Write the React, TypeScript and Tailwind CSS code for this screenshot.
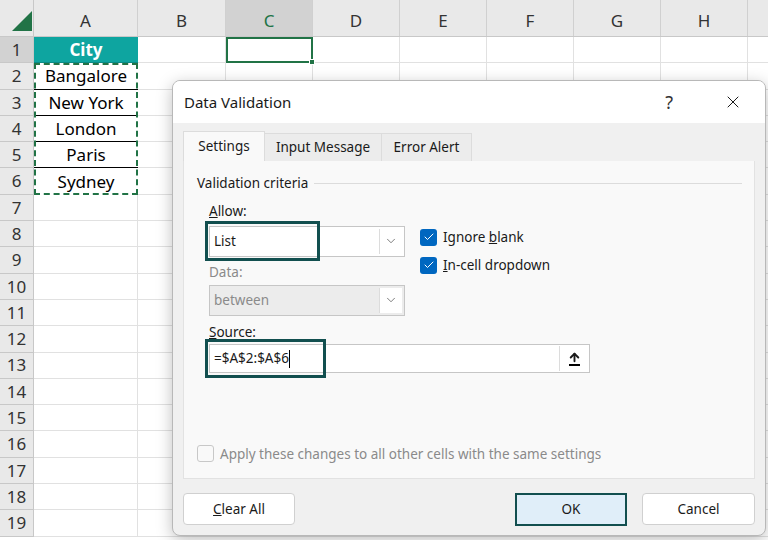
import { Check, ChevronDown, X, ArrowUp } from "lucide-react";

const cols = [
  { l: "A", w: 104 },
  { l: "B", w: 88 },
  { l: "C", w: 87 },
  { l: "D", w: 87 },
  { l: "E", w: 87 },
  { l: "F", w: 87 },
  { l: "G", w: 87 },
  { l: "H", w: 87 },
  { l: "", w: 40 },
];
const cities = ["Bangalore", "New York", "London", "Paris", "Sydney"];
const rows = Array.from({ length: 19 }, (_, i) => i + 1);

function Sheet() {
  return (
    <div className="relative flex flex-col font-['Lato',sans-serif] text-[17px] text-black">
      <div className="flex h-[37px] bg-[#e9e9e9] border-b border-[#c8c8c8]">
        <div className="relative w-[34px] shrink-0 border-r border-[#c8c8c8]">
          <svg className="absolute left-[12px] top-[11px]" width="20" height="20" viewBox="0 0 20 20">
            <polygon points="20,0 20,20 0,20" fill="#217346" />
          </svg>
        </div>
        {cols.map((c) => (
          <div
            key={c.l}
            style={{ width: c.w }}
            className={`shrink-0 flex items-end justify-center pb-[3px] border-r border-[#d0d0d0] ${c.l === "C" ? "bg-[#d2d2d2] text-[#217346]" : "text-[#333]"}`}
          >
            {c.l}
          </div>
        ))}
      </div>
      {rows.map((r) => (
        <div key={r} className="flex h-[26.3px]">
          <div className={`w-[34px] shrink-0 flex items-center justify-center border-r border-b border-[#c8c8c8] text-[#333] ${r === 1 ? "bg-[#d2d2d2]" : "bg-[#e9e9e9]"}`}>
            {r}
          </div>
          {cols.map((c, ci) => {
            if (ci === 0 && r === 1)
              return (
                <div key={c.l} style={{ width: c.w }} className="shrink-0 flex items-center justify-center bg-[#0ea5a0] text-white font-bold border-b border-[#0a8a86]">
                  City
                </div>
              );
            if (ci === 0 && r >= 2 && r <= 6)
              return (
                <div
                  key={c.l}
                  style={{ width: c.w }}
                  className={`shrink-0 flex items-center justify-center bg-white ${r < 6 ? "border-b border-black" : ""}`}
                >
                  {cities[r - 2]}
                </div>
              );
            if (ci === 2 && r === 1)
              return (
                <div key={c.l} style={{ width: c.w }} className="relative shrink-0 border-2 border-[#217346] bg-white">
                  <div className="absolute -right-[4px] -bottom-[4px] w-[6px] h-[6px] bg-[#217346] border border-white" />
                </div>
              );
            return <div key={c.l} style={{ width: c.w }} className="shrink-0 border-r border-b border-[#e1e1e1] bg-white" />;
          })}
        </div>
      ))}
      {/* copy marquee around A2:A6 */}
      <div className="absolute left-[34px] top-[63px] w-[104px] h-[132px] border-2 border-dashed border-[#217346]" />
    </div>
  );
}

function Combo({ value, disabled }: { value: string; disabled?: boolean }) {
  return (
    <div className={`flex h-[31px] w-[196px] border border-[#c6c6c6] ${disabled ? "bg-[#ececec] text-[#8a8a8a]" : "bg-white"}`}>
      <div className="flex-1 flex items-center pl-[4px]">{value}</div>
      <div className="w-[23px] m-[2px] flex items-center justify-center bg-white border-l border-[#dcdcdc]">
        <ChevronDown size={14} strokeWidth={1.3} className="text-[#555]" />
      </div>
    </div>
  );
}

function CheckBox({ label }: { label: React.ReactNode }) {
  return (
    <div className="flex items-center gap-[6px] h-[18px]">
      <div className="w-[17px] h-[17px] rounded-[3px] bg-[#0067c0] flex items-center justify-center">
        <Check size={12} strokeWidth={2} className="text-white" />
      </div>
      <span>{label}</span>
    </div>
  );
}

function Dialog() {
  return (
    <div className="absolute left-[172px] top-[80px] w-[594px] h-[456px] rounded-[8px] border border-[#b8b8b8] bg-[#f0f0f0] shadow-[0_4px_16px_rgba(0,0,0,0.25)] overflow-hidden font-['Open_Sans',sans-serif] text-[13.5px] text-[#1a1a1a]">
      <div className="h-[42px] bg-white flex items-center pl-[11px] pr-[22px] text-[15px]">
        <span className="flex-1">Data Validation</span>
        <span className="mr-[50px] text-[18px] text-[#333]">?</span>
        <X size={20} strokeWidth={1.2} />
      </div>
      <div className="px-[10px] pt-[8px]">
        <div className="flex h-[30px] items-end">
          <div className="h-[30px] w-[82px] bg-[#f9f9f9] border border-b-0 border-[#dcdcdc] flex items-center justify-center">Settings</div>
          <div className="h-[28px] w-[117px] bg-[#ececec] border-t border-r border-[#dcdcdc] flex items-center justify-center">Input Message</div>
          <div className="h-[28px] w-[90px] bg-[#ececec] border-t border-r border-[#dcdcdc] flex items-center justify-center">Error Alert</div>
        </div>
        <div className="h-[318px] bg-[#f9f9f9] border border-t-0 border-[#e2e2e2] pl-[13px] pr-[12px] pt-[12px] flex flex-col">
          <div className="flex items-center gap-[6px]">
            <span>Validation criteria</span>
            <div className="flex-1 h-px bg-[#dcdcdc]" />
          </div>
          <div className="flex pl-[12px] mt-[8px]">
            <div className="flex flex-col w-[196px]">
              <span><u>A</u>llow:</span>
              <div className="relative mt-[4px]">
                <Combo value="List" />
                <div className="absolute -left-[4px] -top-[5px] w-[115px] h-[40px] border-[3px] border-[#124f4f]" />
              </div>
              <span className="mt-[5px] text-[#8a8a8a]">Data:</span>
              <div className="mt-[3px]"><Combo value="between" disabled /></div>
              <span className="mt-[6px]"><u>S</u>ource:</span>
            </div>
            <div className="ml-[15px] mt-[27px] flex flex-col gap-[10px]">
              <CheckBox label={<>Ignore <u>b</u>lank</>} />
              <CheckBox label={<><u>I</u>n-cell dropdown</>} />
            </div>
          </div>
          <div className="relative ml-[12px] mt-[2px] w-[381px] h-[29px] flex bg-white border border-[#c6c6c6]">
            <div className="flex-1 flex items-center pl-[4px]">=$A$2:$A$6<span className="w-px h-[18px] bg-black" /></div>
            <div className="w-[29px] m-[1px] flex flex-col items-center justify-center border-l border-[#dcdcdc]">
              <ArrowUp size={13} strokeWidth={3.5} />
              <div className="w-[11px] h-[2px] bg-black" />
            </div>
            <div className="absolute -left-[5px] -top-[6px] w-[121px] h-[39px] border-[3px] border-[#124f4f]" />
          </div>
          <div className="flex-1" />
          <div className="flex items-center gap-[6px] mb-[14px] text-[#8a8a8a]">
            <div className="w-[17px] h-[17px] rounded-[3px] border border-[#c8c8c8] bg-[#f9f9f9]" />
            <span>Apply these changes to all other cells with the same settings</span>
          </div>
        </div>
        <div className="flex mt-[14px]">
          <button className="w-[112px] h-[32px] bg-white border border-[#d0d0d0] rounded-[4px]"><u>C</u>lear All</button>
          <div className="flex-1" />
          <button className="w-[112px] h-[33px] bg-[#e0eef9] border-[2px] border-[#124f4f]">OK</button>
          <button className="ml-[15px] w-[113px] h-[32px] bg-white border border-[#d0d0d0] rounded-[4px]">Cancel</button>
        </div>
      </div>
    </div>
  );
}

export default function App() {
  return (
    <div className="relative w-[768px] h-[540px] overflow-hidden bg-white">
      <Sheet />
      <Dialog />
    </div>
  );
}
